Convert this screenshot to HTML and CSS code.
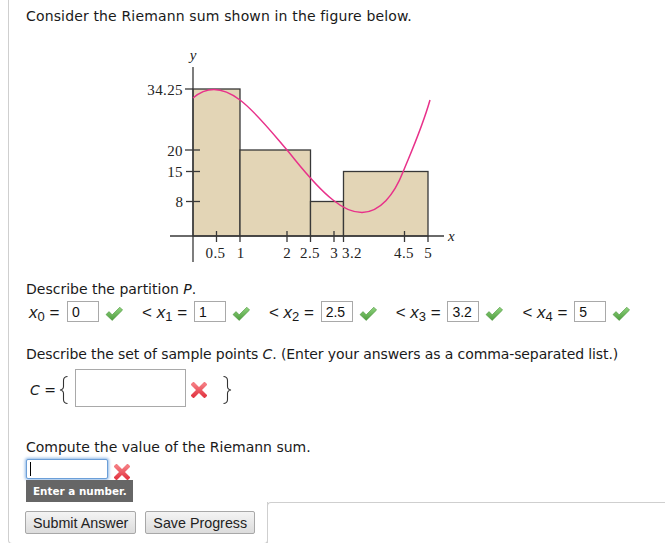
FILE: index.html
```html
<!DOCTYPE html>
<html>
<head>
<meta charset="utf-8">
<link rel="stylesheet" href="styles.css">
</head>
<body>
<svg width="0" height="0" class="defs">
  <defs>
    <linearGradient id="gchk" x1="0" y1="0" x2="0" y2="1">
      <stop offset="0" stop-color="#8fd37d"/>
      <stop offset="1" stop-color="#4f9e3f"/>
    </linearGradient>
    <linearGradient id="gx" x1="0" y1="0" x2="0" y2="1">
      <stop offset="0" stop-color="#f47a80"/>
      <stop offset="1" stop-color="#e43c48"/>
    </linearGradient>
    <symbol id="chk" viewBox="0 0 18 15">
      <path d="M1,8.6 L4,5.6 L7.2,8.8 L14.8,1.2 L17.6,4 L7.2,14.4 Z" fill="url(#gchk)" stroke="#4a933b" stroke-width="0.6" stroke-linejoin="round"/>
    </symbol>
    <symbol id="xx" viewBox="0 0 16 16">
      <path d="M2.5,2.5 L13.5,13.5 M13.5,2.5 L2.5,13.5" stroke="url(#gx)" stroke-width="4.2" stroke-linecap="square"/>
    </symbol>
  </defs>
</svg>
<div class="page">
  <div class="body">
    <p class="lead">Consider the Riemann sum shown in the figure below.</p>
    <svg class="fig" width="340" height="217" viewBox="130 45 340 217">
      <g fill="#e3d5b6" stroke="#383838" stroke-width="1.3">
        <rect x="193" y="89" width="47" height="147"/>
        <rect x="240" y="150" width="70.5" height="86"/>
        <rect x="310.5" y="201.5" width="33" height="34.5"/>
        <rect x="343.5" y="171.5" width="84.5" height="64.5"/>
      </g>
      <g stroke="#383838" stroke-width="1.3" fill="none">
        <line x1="170" y1="236" x2="444" y2="236"/>
        <line x1="193" y1="67" x2="193" y2="262"/>
        <line x1="240" y1="236" x2="240" y2="242"/>
        <line x1="310.5" y1="236" x2="310.5" y2="242"/>
        <line x1="343.5" y1="236" x2="343.5" y2="242"/>
        <line x1="428" y1="236" x2="428" y2="242"/>
        <line x1="216.5" y1="231" x2="216.5" y2="242"/>
        <line x1="287" y1="231" x2="287" y2="242"/>
        <line x1="334" y1="231" x2="334" y2="242"/>
        <line x1="404.5" y1="231" x2="404.5" y2="242"/>
        <line x1="185" y1="89" x2="193" y2="89"/>
        <line x1="185" y1="150" x2="200" y2="150"/>
        <line x1="186" y1="171.5" x2="200" y2="171.5"/>
        <line x1="186" y1="201.5" x2="200" y2="201.5"/>
      </g>
      <path d="M193,98 C200,92 207,89.5 214,89.5 C224,89.5 232,94 240,100 C256,112 274,135 287,150 C298,163 314,185 333,200 C344,209 353,212.5 362,212.5 C380,212 394,195 403,172 C412,150 422,128 430,100" fill="none" stroke="#e8318a" stroke-width="1.5"/>
      <g class="ax" font-family="Liberation Serif, serif" font-size="15" fill="#222">
        <text x="183" y="94.5" text-anchor="end" letter-spacing="0.4">34.25</text>
        <text x="183" y="155.5" text-anchor="end" letter-spacing="0.4">20</text>
        <text x="183" y="176.5" text-anchor="end" letter-spacing="0.4">15</text>
        <text x="183" y="206.5" text-anchor="end">8</text>
        <text x="215.5" y="257.5" text-anchor="middle" letter-spacing="0.4">0.5</text>
        <text x="240.5" y="257.5" text-anchor="middle">1</text>
        <text x="287" y="257.5" text-anchor="middle">2</text>
        <text x="310" y="257.5" text-anchor="middle" letter-spacing="0.4">2.5</text>
        <text x="334" y="257.5" text-anchor="middle">3</text>
        <text x="352" y="257.5" text-anchor="middle" letter-spacing="0.4">3.2</text>
        <text x="404" y="257.5" text-anchor="middle" letter-spacing="0.4">4.5</text>
        <text x="428" y="257.5" text-anchor="middle">5</text>
        <text x="448" y="241" font-style="italic">x</text>
        <text x="193" y="60" font-style="italic" text-anchor="middle">y</text>
      </g>
    </svg>
    <p class="q q1">Describe the partition <i>P</i>.</p>
    <div class="row">
      <span class="math first"><i>x</i><sub>0</sub> = </span>
      <input class="box" readonly value="0">
      <svg class="chk"><use href="#chk"/></svg>
      <span class="math">&lt; <i>x</i><sub>1</sub> = </span>
      <input class="box" readonly value="1">
      <svg class="chk"><use href="#chk"/></svg>
      <span class="math">&lt; <i>x</i><sub>2</sub> = </span>
      <input class="box" readonly value="2.5">
      <svg class="chk"><use href="#chk"/></svg>
      <span class="math">&lt; <i>x</i><sub>3</sub> = </span>
      <input class="box" readonly value="3.2">
      <svg class="chk"><use href="#chk"/></svg>
      <span class="math">&lt; <i>x</i><sub>4</sub> = </span>
      <input class="box" readonly value="5">
      <svg class="chk"><use href="#chk"/></svg>
    </div>
    <p class="q q2">Describe the set of sample points <i>C</i>. (Enter your answers as a comma-separated list.)</p>
    <div class="crow">
      <span class="clab"><i>C</i> =</span>
      <svg class="brace" width="12" height="28" viewBox="0 0 12 28"><path d="M9.5,0.5 Q5.5,0.8 5.5,4.5 L5.5,10.5 Q5.5,13.6 2,14 Q5.5,14.4 5.5,17.5 L5.5,23.5 Q5.5,27.2 9.5,27.5" fill="none" stroke="#333" stroke-width="1.1"/></svg>
      <span class="cbox"></span>
      <svg class="xic"><use href="#xx"/></svg>
      <svg class="brace rb" width="12" height="28" viewBox="0 0 12 28"><path d="M2.5,0.5 Q6.5,0.8 6.5,4.5 L6.5,10.5 Q6.5,13.6 10,14 Q6.5,14.4 6.5,17.5 L6.5,23.5 Q6.5,27.2 2.5,27.5" fill="none" stroke="#333" stroke-width="1.1"/></svg>
    </div>
    <p class="q q3">Compute the value of the Riemann sum.</p>
    <div class="nrow">
      <span class="focus"><span class="caret"></span></span>
      <svg class="xic x2"><use href="#xx"/></svg>
    </div>
    <div class="tip">Enter a number.</div>
  </div>
  <div class="foot">
    <div class="foot-left">
      <button class="btn">Submit Answer</button>
      <button class="btn">Save Progress</button>
    </div>
    <div class="foot-right"></div>
  </div>
</div>
</body>
</html>
```
FILE: styles.css
```css
html, body {
  margin: 0;
  padding: 0;
  background: #fff;
}
body {
  font-family: "DejaVu Sans", Verdana, sans-serif;
  font-size: 14px;
  color: #1a1a1a;
  width: 665px;
  overflow: hidden;
}
.defs {
  position: absolute;
  width: 0;
  height: 0;
}
.page {
  margin-left: 8px;
}
.body {
  border-left: 1px solid #cfcfcf;
  padding: 8px 0 0 17px;
}
p {
  margin: 0;
  line-height: 16px;
}
.lead {
  margin: 0;
  letter-spacing: 0.15px;
}
.fig {
  display: block;
  margin: 21px 0 0 104px;
}
.q1 {
  margin-top: 19px;
}
.row {
  display: flex;
  align-items: center;
  height: 21px;
  margin-top: 4px;
}
.math {
  font-family: "Liberation Sans", Arial, sans-serif;
  font-size: 17px;
  white-space: pre;
  margin-right: 2px;
  line-height: 21px;
  position: relative;
  top: 1px;
}
.math.first {
  margin-left: 3px;
  margin-right: 3px;
}
.math sub {
  font-size: 13px;
  vertical-align: -3px;
  line-height: 0;
}
.box {
  box-sizing: border-box;
  width: 32px;
  height: 21px;
  border: 1px solid #a9a9a9;
  padding: 0 0 0 4px;
  margin: 0;
  font-family: "Liberation Sans", Arial, sans-serif;
  font-size: 14px;
  color: #111;
  background: #fff;
  outline: none;
}
.chk {
  width: 18px;
  height: 15px;
  margin: 3px 19px 0 6px;
}
.q2 {
  margin-top: 24px;
  letter-spacing: -0.1px;
}
.crow {
  display: flex;
  align-items: center;
  height: 38px;
  margin-top: 7px;
}
.clab {
  margin-left: 4px;
  font-size: 14px;
  width: 28px;
  position: relative;
  top: 2px;
}
.brace {
  display: block;
  position: relative;
  top: 2px;
}
.cbox {
  box-sizing: border-box;
  width: 111px;
  height: 38px;
  border: 1px solid #a9a9a9;
  margin-left: 5px;
  background: #fff;
}
.xic {
  width: 16px;
  height: 16px;
  margin-left: 5px;
  position: relative;
  top: 2px;
}
.rb {
  margin-left: 14px;
}
.q3 {
  margin-top: 32px;
}
.nrow {
  display: flex;
  align-items: center;
  margin-top: 4px;
  height: 20px;
}
.focus {
  box-sizing: border-box;
  display: flex;
  align-items: center;
  width: 82px;
  height: 20px;
  border: 1px solid #6c9fd8;
  box-shadow: 0 0 3px 1px #8fb8e6;
  border-radius: 2px;
  background: #fff;
  padding-left: 3px;
}
.caret {
  display: block;
  width: 1px;
  height: 14px;
  background: #000;
}
.x2 {
  margin-left: 6px;
  top: 3px;
}
.tip {
  display: inline-block;
  margin-top: 1px;
  background: #666;
  color: #fff;
  font-weight: bold;
  font-size: 10.4px;
  line-height: 22px;
  height: 22px;
  padding: 0 6px 0 7px;
  vertical-align: top;
}
.foot {
  display: flex;
  height: 41px;
}
.foot-left {
  box-sizing: border-box;
  width: 260px;
  height: 42px;
  border-left: 1px solid #cfcfcf;
  border-bottom: 1px solid #cfcfcf;
  border-right: 1px solid #cfcfcf;
  border-bottom-left-radius: 4px;
  border-bottom-right-radius: 4px;
  padding: 9px 0 0 16px;
  display: flex;
  align-items: flex-start;
  gap: 9px;
}
.foot-right {
  flex: 1;
  margin-left: -1px;
  border-top: 1px solid #cfcfcf;
  border-left: 1px solid #cfcfcf;
  border-top-left-radius: 4px;
}
.btn {
  box-sizing: border-box;
  height: 23px;
  margin: 0;
  padding: 0 7px;
  font-family: "Liberation Sans", Arial, sans-serif;
  font-size: 14.3px;
  color: #222;
  background: linear-gradient(#f4f4f4, #dcdcdc);
  border: 1px solid #a8a8a8;
  border-radius: 2px;
}
```
